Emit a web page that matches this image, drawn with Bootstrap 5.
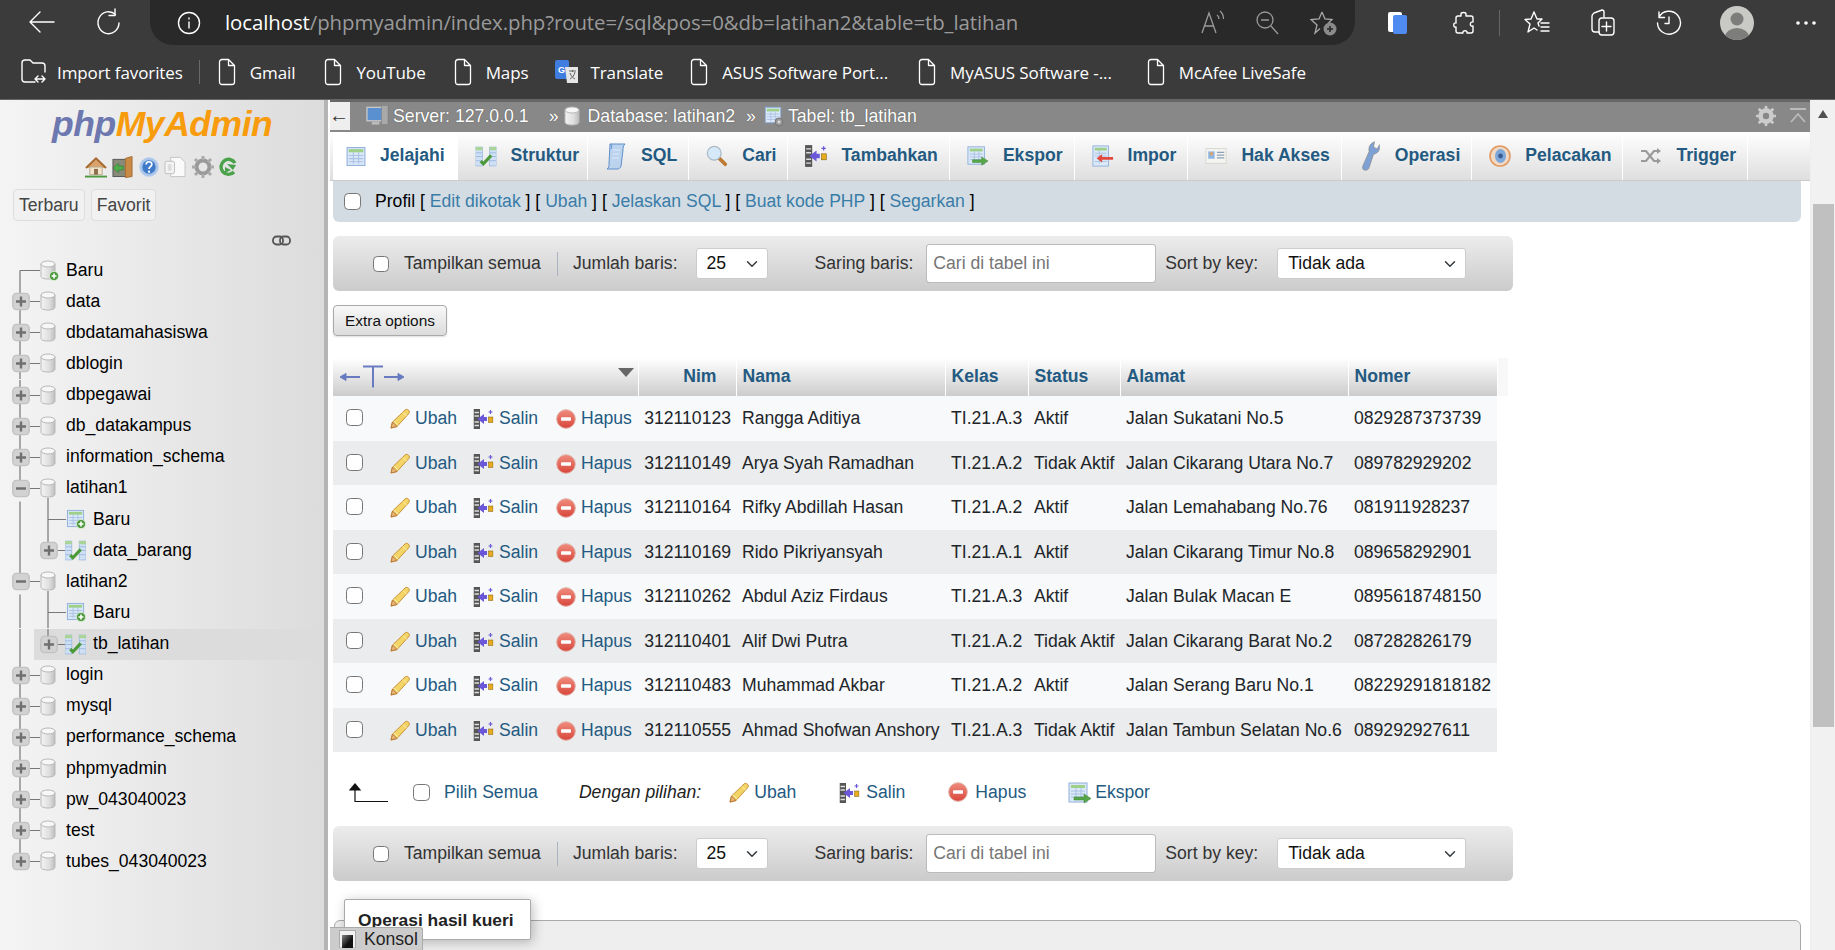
<!DOCTYPE html>
<html lang="id">
<head>
<meta charset="utf-8">
<title>phpMyAdmin</title>
<link href="https://cdn.jsdelivr.net/npm/bootstrap@5.3.0/dist/css/bootstrap.min.css" rel="stylesheet">
<style>
html,body{height:950px;overflow:hidden}
body{font:17.6px/1.25 "Liberation Sans",Arial,sans-serif;color:#000;background:#fff}
a{color:#235a81;text-decoration:none}
svg{flex:none;display:block}
.defsbox{width:0;height:0;overflow:hidden}
/* browser chrome */
.chr1{height:50px;background:#3b3b3b;color:#fff}
.chr2{height:50px;padding-bottom:5px;background:#3b3b3b;color:#fff;border-bottom:1px solid #666;font:17px/1 "Open Sans",sans-serif;letter-spacing:-.1px}
.chr-ico{fill:none;stroke:#fff;stroke-width:1.4;stroke-linecap:round;stroke-linejoin:round}
.urlpill{width:1205px;flex:none;height:45px;margin:0 0 5px 26px;background:#292929;border-radius:0 0 23px 23px;font:20.4px/1 "Open Sans",sans-serif;letter-spacing:-.07px;padding-left:27px}
.urlhost{color:#fff}.urlrest{color:#9a9a9a}
.bm{white-space:nowrap}
.bm svg{margin-right:14px}
/* left nav */
.pnav{width:324px;flex:none;background:linear-gradient(90deg,#f4f4f4,#dcdcdc);overflow:hidden}
.logotext{font:italic 700 35.5px/1 "Liberation Sans",sans-serif;letter-spacing:-.45px;margin:7px 0 0 52px;height:39px}
.logotext b:first-child{color:#6c78af}.logotext b:last-child{color:#f89c0e}
.navicons{margin:9px 0 0 85px;gap:5.4px;height:24px}
.navtabs{margin:10px 0 0 13px;gap:6px}
.navbtn{padding:0 5px;height:32px;line-height:30px;background:#f1f1f1;border:1px solid #ddd;border-radius:4px;color:#444}
.linkico{margin:14px 0 9px 272px}
.treerow{height:31.14px;white-space:nowrap}
.nowcur{background:linear-gradient(90deg,transparent 34px,#dcdcdc 34px)}
.tline{stroke:#777;stroke-width:1.2;fill:none}
.split{width:6px;flex:none;background:linear-gradient(90deg,#b4b4b4 66%,#fff 66%)}
/* main */
.pmain{min-width:0;position:relative;overflow:hidden}
.srvbar{height:32px;padding-bottom:2px;background:#888;border-top:2px solid #666;color:#fff;font-size:17.7px;margin-left:-2px;text-shadow:0 0 1px #444;white-space:nowrap}
.backbox{width:22px;height:28px;background:#eee;color:#333;font-size:20px;line-height:26px;text-align:center;text-shadow:none;margin-right:16px}
.srvsep1{margin:0 5px 0 20px}
.srvsep2{margin:0 8px 0 11px}
.pmtabs{height:49px;background:linear-gradient(#fff,#dedede);padding-left:3px;border-bottom:1px solid #ccc}
.pmtab{height:48px;padding:0 11px 0 17px;border-right:1px solid #fff;font-weight:700;color:#235a81;gap:14px;white-space:nowrap}
.pmtab svg{width:22px}
.pmtab.on{background:#fff;padding-left:12px;padding-right:12px;gap:13px}
.pmtab.tb2{padding-right:8px}
.pfbar{height:41px;margin:0 9px 0 3px;background:#d3dce3;border-radius:0 0 6px 6px;padding-left:11px;white-space:nowrap}
.pfbar a{color:#3a7ca8}
.pftx{margin-left:14px}
.fchk{width:17px;height:17px;margin:0!important;flex:none;border:1px solid #767676;border-radius:3px}
.tbar{width:1180px;height:55px;margin-left:3px;background:linear-gradient(#ececec,#cbcbcb);border-radius:6px;color:#333;white-space:nowrap}
.tbar .fchk{margin-left:40px!important;width:16px;height:16px}
.tbar .lb1{margin-left:15px}
.tbsep{width:1px;height:24px;background:#a9b4c0;margin-left:16px}
.lb2{margin-left:15px}
.sel{height:31px;padding:0 0 0 10px;margin-left:18px;font-size:17.6px;line-height:29px;color:#111;border:1px solid #ccc;border-radius:3px;background-position:right 8px center;background-size:14px 12px}
.sel1{width:72px}.sel2{width:189px;margin-left:19px}
.lb3{margin-left:47px}.lb4{margin-left:9px}
.inp{width:230px;height:39px;margin-left:13px;padding:0 6px;font-size:17.6px;border:1px solid #bbb;border-radius:3px}
.inp::placeholder{color:#757575;opacity:1}
.xbtn{display:block;width:114px;height:31px;margin:14px 0 22px 3px;padding:0;font-size:15.4px;line-height:29px;color:#111;background:linear-gradient(#f8f8f8,#dcdcdc);border:1px solid #aaa;border-radius:4px;box-shadow:0 1px 2px #ddd}
.dtbl{width:1175px;margin:0 0 0 3px;table-layout:fixed;border-collapse:collapse}
.dtbl>:not(caption)>*>*{padding:0;border:0;box-shadow:none;background:none;color:inherit;vertical-align:middle;white-space:nowrap}
.dtbl thead tr{height:38px;background:linear-gradient(#fff,#ccc)}
.dtbl th{color:#235a81;border-right:1px solid #fff!important;padding-left:6px!important}
.dtbl thead tr th.xcol{background:#f8f8f8!important;border:0!important;padding:0!important}
.dtbl tbody tr{height:44.5px;background:#f8f9fa}
.dtbl tbody tr.ev{background:#ebeced}
.dtbl td{padding-left:6px!important;padding-top:2px!important}
.dtbl tbody td.xcol{background:#fff!important;padding:0!important}
.dtbl td.ck{padding-left:13px!important;padding-top:4px!important}
.dtbl td.num{text-align:right;padding-right:5px!important;padding-left:0!important}
.acell{display:flex;align-items:center;gap:5px}
.dtbl td.ac1{padding-left:7px!important}
.ac1 .acell{gap:4px}
.dtbl td.ac2{padding-left:8px!important}
.dtbl td.ac3{padding-left:8px!important}
.thsort{height:38px}
.tsort{width:0;height:0;border:8px solid transparent;border-top:9px solid #666;border-bottom:0;margin:0 4px 10px auto}
.bact{height:74px;padding:7px 0 0 19px;white-space:nowrap}
.bact .fchk{margin-left:25px!important}
.bact>a.psm{margin-left:14px}
.bact em{margin-left:41px;color:#222}
.bact .alink{display:flex;align-items:center;gap:4px}
.bact .alink.g6{gap:6px}.bact .alink.g7{gap:7px}.bact .alink.g3{gap:3px}
.flegwrap{margin-top:39px;margin-right:9px;margin-left:4px;height:80px;background:#eee;border:1px solid #aaa;border-radius:6px 6px 0 0}
.fleg{display:block;width:187px;height:41px;margin:-22px 0 0 9px;padding-left:13px;line-height:41px;font-weight:700;color:#222;font-size:17.4px;background:#fff;border:1px solid #aaa;border-radius:2px;box-shadow:2px 2px 12px rgba(0,0,0,.25)}
.konsol{position:absolute;left:-2px;bottom:0;width:95px;height:23px;background:#ccc;border:1px solid #aaa;border-bottom:0;border-radius:3px 3px 0 0;color:#222;padding-left:10px;gap:8px;line-height:22px}
.vscr{width:25px;flex:none;background:#f1f1f1;border-left:1px solid #eee}
.vscr i{display:block;width:0;height:0;margin:10px auto 0;border:5px solid transparent;border-bottom:8px solid #505050;border-top:0}
.vthumb{width:21px;height:523px;margin:86px auto 0;background:#c0c0c0}
</style>
</head>
<body class="d-flex flex-column">
<svg class="defsbox" aria-hidden="true">
<defs>
<linearGradient id="gdb" x1="0" x2="1" y1="0" y2="0"><stop offset="0" stop-color="#f4f4f4"/><stop offset=".6" stop-color="#dedede"/><stop offset="1" stop-color="#bdbdbd"/></linearGradient>
<linearGradient id="gred" x1="0" x2="0" y1="0" y2="1"><stop offset="0" stop-color="#f08d7e"/><stop offset="1" stop-color="#d8453b"/></linearGradient>
<symbol id="db" viewBox="0 0 16 20"><path d="M1 4v12c0 2 3 3 7 3s7-1 7-3V4z" fill="url(#gdb)" stroke="#b8b8b8"/><ellipse cx="8" cy="4" rx="7" ry="3" fill="#f7f7f7" stroke="#b8b8b8"/></symbol>
<symbol id="plusg" viewBox="0 0 10 10"><circle cx="5" cy="5" r="4.6" fill="#4f9a3f" stroke="#dff0d8" stroke-width=".8"/><path d="M2.5 5h5M5 2.5v5" stroke="#fff" stroke-width="1.6"/></symbol>
<symbol id="tbl" viewBox="0 0 20 20"><rect x="1.5" y="1.5" width="17" height="17" fill="#dbe8f7" stroke="#8fb0dc"/><rect x="3" y="3" width="14" height="3" fill="#9fd08a"/><path d="M3 9h14M3 12h14M3 15h14M7.500 6v11M12.500 6v11" stroke="#a9c2e5"/></symbol>
<symbol id="tst" viewBox="0 0 20 20"><rect x="0" y="1" width="6.500" height="18" fill="#cfe0f4" stroke="#8fb0dc" stroke-width=".6"/><rect x="13.500" y="1" width="6.500" height="18" fill="#cfe0f4" stroke="#8fb0dc" stroke-width=".6"/><path d="M.5 6.500h6M.5 10h6M.5 14h6M13.500 6.500h6M13.500 10h6M13.500 14h6" stroke="#8fb0dc" stroke-width=".7"/><rect x="0" y="1" width="6.500" height="3" fill="#a8d595"/><rect x="13.500" y="1" width="6.500" height="3" fill="#a8d595"/><path d="M5 14.500l2.500 2.500L15 9" fill="none" stroke="#4c9a3a" stroke-width="3"/></symbol>
<symbol id="exp" viewBox="0 0 18 18"><rect x=".8" y=".8" width="16.400" height="16.400" rx="4" fill="#d2d2d2" stroke="#c2c2c2" stroke-width="1.400"/><path d="M4 9h10M9 4v10" stroke="#707070" stroke-width="2.400"/></symbol>
<symbol id="col" viewBox="0 0 18 18"><rect x=".8" y=".8" width="16.400" height="16.400" rx="4" fill="#d2d2d2" stroke="#c2c2c2" stroke-width="1.400"/><path d="M4 9h10" stroke="#707070" stroke-width="2.400"/></symbol>
<symbol id="pen" viewBox="0 0 22 22"><path d="M2 20l1.500-6L16 2c1-1 2.500-.8 3.500.2s1.200 2.500.2 3.500L8 18.500z" fill="#f3d466" stroke="#c9923b"/><path d="M5 13l4.500 4.500M14 4.500l4 4" stroke="#fbeeb0"/><path d="M2 20l1.500-6 4.500 4.500z" fill="#e9b675" stroke="#b9793a"/></symbol>
<symbol id="cop" viewBox="0 0 20 22"><rect x="0" y="1" width="6.500" height="20" fill="#555"/><path d="M1 4.500h4.500M1 8h4.500M1 14h4.500M1 17.500h4.500" stroke="#ddd" stroke-width="1.300"/><path d="M4 11l6.500-5v3h3v4h-3v3z" fill="#6a58d8"/><rect x="15" y="9" width="4.500" height="5.500" fill="#e7ad1e" stroke="#7a5c10" stroke-width=".5"/><path d="M17 2v4M15 4h4" stroke="#6a58d8" stroke-width="1.200"/></symbol>
<symbol id="del" viewBox="0 0 20 20"><circle cx="10" cy="10" r="9.300" fill="url(#gred)" stroke="#e0b0a6"/><rect x="5" y="8.300" width="10" height="3.400" rx=".8" fill="#fff"/></symbol>
<symbol id="expo" viewBox="0 0 24 22"><rect x="1" y="1" width="18" height="19" fill="#dbe8f7" stroke="#8fb0dc"/><rect x="3" y="3" width="14" height="3" fill="#9fd08a"/><path d="M3 9h14M3 12h14M3 15h14M8 6v12M13 6v12" stroke="#a9c2e5"/><path d="M6 15h10v-3l7 4.500-7 4.500v-3H6z" fill="#57a64a" stroke="#3e8433" stroke-width=".5"/></symbol>
<symbol id="impo" viewBox="0 0 24 24"><rect x="1" y="1" width="17" height="22" fill="#dbe8f7" stroke="#8fb0dc"/><rect x="3" y="3" width="13" height="3" fill="#9fd08a"/><path d="M3 9h13M3 12h13M3 18h13M8 6v14" stroke="#a9c2e5"/><path d="M23 13H11v-3l-6 4.500 6 4.500v-3h12z" fill="#e2483c"/></symbol>
<symbol id="sqlc" viewBox="0 0 22 28"><path d="M5 2h15c-2 2-2 4-2 6l-2 16c-.5 2-2 3-4 3H2c2-1 2-3 2-5z" fill="#bcd3ee" stroke="#5f8fca"/><path d="M5 2c2 0 2 3 1 5" fill="none" stroke="#5f8fca"/><path d="M8 8h7M8 12h6M7 16h7" stroke="#dfeafa"/></symbol>
<symbol id="lens" viewBox="0 0 24 24"><path d="M14 14l7 7" stroke="#bd7a32" stroke-width="4" stroke-linecap="round"/><circle cx="9" cy="9" r="7.500" fill="#d6e9f8" stroke="#a9b9c6" stroke-width="1.400"/></symbol>
<symbol id="priv" viewBox="0 0 24 20"><rect x="1" y="2" width="22" height="16" fill="#f4f4f0" stroke="#d6d6d0"/><rect x="3.500" y="5" width="7" height="8" fill="#8fb6e2"/><circle cx="7" cy="7.500" r="2" fill="#d9a36b"/><path d="M13 6h8M13 9h8M13 12h8" stroke="#8da0b5" stroke-width="1.300"/></symbol>
<symbol id="wren" viewBox="0 0 22 36"><path d="M6 34c-3 0-4-2-3-5l7-16c-1-5 1-9 6-11l-1 6 4 2 3-5c1 6-2 10-7 11l-5 15c-.5 2-2 3-4 3z" fill="#7da1d4" stroke="#8c8c8c" stroke-width=".8"/></symbol>
<symbol id="eyee" viewBox="0 0 22 22"><circle cx="11" cy="11" r="10" fill="#f1d9c4" stroke="#e29a64" stroke-width="1.600"/><ellipse cx="11.500" cy="11" rx="5.500" ry="7" fill="#7ea7da"/><circle cx="11.500" cy="11" r="2.400" fill="#3c5a8c"/></symbol>
<symbol id="trig" viewBox="0 0 22 20"><path d="M1 5h5l8 10h5M1 15h5l8-10h5" fill="none" stroke="#9a9a9a" stroke-width="2.200"/><path d="M17 2l4 3-4 3zM17 12l4 3-4 3z" fill="#9a9a9a"/></symbol>
<symbol id="srv" viewBox="0 0 24 22"><rect x="1" y="2" width="18" height="14" fill="#5a8fd0" stroke="#c8c8c8" stroke-width="1.400"/><rect x="16" y="0" width="7" height="20" fill="#a9a9a9" stroke="#777" stroke-width=".5"/><rect x="6" y="17" width="8" height="3" fill="#bbb"/></symbol>
<symbol id="tgear" viewBox="0 0 20 22"><use href="#tbl" width="18" height="20"/><circle cx="15" cy="17" r="4" fill="#999" stroke="#777"/><circle cx="15" cy="17" r="1.400" fill="#ddd"/></symbol>
<symbol id="pfile" viewBox="0 0 18 28"><path d="M1.500 4c0-1.500 1-2.500 2.500-2.500h6.500l6 6V24c0 1.500-1 2.500-2.500 2.500H4c-1.500 0-2.500-1-2.500-2.500zM10.500 1.500V7.500h6" fill="none" stroke="#fff" stroke-width="1.300" stroke-linejoin="round"/></symbol>
</defs>
</svg>

<div class="chr1 d-flex align-items-start flex-shrink-0">
  <svg class="chr-ico" width="30" height="30" viewBox="0 0 30 30" style="margin:8px 0 0 27px"><path d="M27 14H3M13 4L3 14l10 10"/></svg>
  <svg class="chr-ico" width="30" height="30" viewBox="0 0 30 30" style="margin:8px 0 0 37px"><path d="M25 15a10.500 11 0 1 1-3.500-8.500M21 1v6.500h-6"/></svg>
  <div class="urlpill d-flex align-items-center">
    <svg class="chr-ico" width="24" height="24" viewBox="0 0 24 24"><circle cx="12" cy="12" r="10.500"/><path d="M12 11v6M12 7v1"/></svg>
    <span class="ms-4"><span class="urlhost">localhost</span><span class="urlrest">/phpmyadmin/index.php?route=/sql&amp;pos=0&amp;db=latihan2&amp;table=tb_latihan</span></span>
  </div>
  <div class="d-flex" style="margin-left:-155px;margin-top:10px;gap:30px">
    <svg width="25" height="26" viewBox="0 0 25 26" fill="none" stroke="#9a9a9a" stroke-width="1.300"><path d="M2 23L9 3l7 20M4.500 16h9M17 5c1.500 1 2 2.500 2 4M20 1c2.500 2 3.500 5 3.500 8"/></svg>
    <svg width="25" height="26" viewBox="0 0 25 26" fill="none" stroke="#9a9a9a" stroke-width="1.300"><circle cx="10" cy="10" r="8"/><path d="M6 10h8M16 16l7 8"/></svg>
    <svg width="27" height="26" viewBox="0 0 27 26" fill="none" stroke="#a8a8a8" stroke-width="1.300"><path d="M12 2l3 7 7 .5-4 4M10 18.500L5 23l2-8-6-5.500 8-.5 3-7"/><circle cx="20" cy="19" r="6.500" fill="#8a8a8a" stroke="none"/><path d="M17 19h6M20 16v6" stroke="#292929" stroke-width="1.600"/></svg>
  </div>
  <div class="d-flex align-items-center" style="margin:6px 0 0 50px;height:34px">
    <svg width="22" height="24" viewBox="0 0 22 24"><rect x="1" y="1" width="14" height="20" rx="2" fill="#fff"/><rect x="6" y="4" width="14" height="19" rx="2" fill="#4f8bf0"/></svg>
    <svg class="chr-ico" width="24" height="26" viewBox="0 0 24 26" style="margin-left:43px"><path d="M9 4c0-2 5-2 5 0v2h5c1 0 2 1 2 2v4c-3-1-4 5 0 4v5c0 1-1 2-2 2h-4c1-3-5-3-4 0H6c-1 0-2-1-2-2v-4c-3 1-3-5 0-4V8c0-1 1-2 2-2h3z"/></svg>
    <span style="width:1px;height:26px;background:#666;margin-left:23px"></span>
    <svg class="chr-ico" width="26" height="26" viewBox="0 0 26 26" style="margin-left:24px"><path d="M10 2l3 7h5l-4 4 1 3M10 2L7 9l-6 .5L6 14l-2 8 6-4 3 2M17 13h8M17 17h8M17 21h8"/></svg>
    <svg class="chr-ico" width="24" height="28" viewBox="0 0 24 28" style="margin-left:41px"><rect x="8" y="9" width="15" height="17" rx="3"/><path d="M15.500 13v9M11 17.500h9M8 23H4c-2 0-3-1-3-3V7c0-1 .5-2 2-3l8-3c1 0 2 1 2 2v5"/></svg>
    <svg class="chr-ico" width="26" height="26" viewBox="0 0 26 26" style="margin-left:41px"><path d="M3 7A11.500 11.500 0 1 1 1.500 13M3 2v5.500h5.500M13 7v6.500h-4"/></svg>
    <svg width="34" height="34" viewBox="0 0 34 34" style="margin-left:38px"><defs><clipPath id="cav"><circle cx="17" cy="17" r="17"/></clipPath></defs><circle cx="17" cy="17" r="17" fill="#c9c9c6"/><g clip-path="url(#cav)" fill="#7d7d7b"><circle cx="17" cy="13" r="6.500"/><ellipse cx="17" cy="31" rx="12" ry="9"/></g></svg>
    <svg width="22" height="6" viewBox="0 0 22 6" fill="#fff" style="margin-left:41px"><circle cx="3" cy="3" r="1.800"/><circle cx="11" cy="3" r="1.800"/><circle cx="19" cy="3" r="1.800"/></svg>
  </div>
</div>

<div class="chr2 d-flex align-items-center flex-shrink-0">
  <svg class="chr-ico" width="26" height="26" viewBox="0 0 26 26" style="margin-left:21px"><path d="M14 23H4c-2 0-3-1-3-3V4c0-1.500 1-3 3-3h5l3 3h9c2 0 3 1 3 3v6M14 20h10M17 17l-3 3 3 3M21 17l3 3-3 3"/></svg>
  <span style="margin-left:10px">Import favorites</span>
  <span style="width:1px;height:24px;background:#6a6a6a;margin-left:16px"></span>
  <div class="d-flex align-items-center bm" style="margin-left:18px"><svg width="18" height="28" viewBox="0 0 18 28"><use href="#pfile"/></svg>Gmail</div>
  <div class="d-flex align-items-center bm" style="margin-left:29px"><svg width="18" height="28" viewBox="0 0 18 28"><use href="#pfile"/></svg>YouTube</div>
  <div class="d-flex align-items-center bm" style="margin-left:28px"><svg width="18" height="28" viewBox="0 0 18 28"><use href="#pfile"/></svg>Maps</div>
  <div class="d-flex align-items-center bm" style="margin-left:27px"><svg width="24" height="26" viewBox="0 0 24 26" style="margin-right:11px"><rect x="0" y="1" width="14" height="19" rx="2" fill="#3f7de0"/><path d="M10 8h13v16H12z" fill="#e6e6e6"/><text x="3" y="14" font-size="9" font-weight="700" fill="#fff" font-family="Liberation Sans">G</text><path d="M14 12h7M17.500 11v2M20 13c-1 4-3 6-5 7M15 14c1 3 3 5 5 6" stroke="#666" fill="none"/></svg>Translate</div>
  <div class="d-flex align-items-center bm" style="margin-left:27px"><svg width="18" height="28" viewBox="0 0 18 28"><use href="#pfile"/></svg>ASUS Software Port...</div>
  <div class="d-flex align-items-center bm" style="margin-left:30px"><svg width="18" height="28" viewBox="0 0 18 28"><use href="#pfile"/></svg>MyASUS Software -...</div>
  <div class="d-flex align-items-center bm" style="margin-left:35px"><svg width="18" height="28" viewBox="0 0 18 28"><use href="#pfile"/></svg>McAfee LiveSafe</div>
</div>

<div class="d-flex flex-grow-1" style="min-height:0">
  <aside class="pnav">
    <div class="logotext"><b>php</b><b>MyAdmin</b></div>
    <div class="d-flex align-items-center navicons">
      <svg width="22" height="22" viewBox="0 0 23 22"><path d="M1 12L11.500 2 22 12" fill="#d9a36b" stroke="#a56a30" stroke-width="2"/><path d="M5 11h13v8H5z" fill="#f0e4cc" stroke="#b9a98e"/><rect x="9.500" y="13" width="4" height="6" fill="#8a6b4a"/><path d="M0 21h23" stroke="#4f9a3f" stroke-width="2"/></svg>
      <svg width="21" height="22" viewBox="0 0 22 22"><rect x="1" y="3" width="14" height="18" fill="#8a8a7a" stroke="#555"/><path d="M14 2l7-2v21l-7 1z" fill="#c98a45" stroke="#a56a30"/><path d="M1 12l6-5v3h5v4H7v3z" fill="#4fae4a" stroke="#2e7a2a" stroke-width=".6"/></svg>
      <svg width="20" height="20" viewBox="0 0 21 21"><circle cx="10.500" cy="10.500" r="10" fill="#a8c4e8" stroke="#c6d8ef"/><circle cx="10.500" cy="10.500" r="7" fill="#3f7ac8"/><path d="M7.500 8c0-4 6-4 6 0 0 2-3 2-3 4.500" fill="none" stroke="#fff" stroke-width="1.800"/><circle cx="10.500" cy="15.500" r="1.200" fill="#fff"/></svg>
      <svg width="22" height="22" viewBox="0 0 23 22"><path d="M7 1h10l5 5v15H7z" fill="#fafafa" stroke="#c4c4c4"/><rect x="1" y="5" width="10" height="13" rx="2" fill="#f3f3f3" stroke="#bdbdbd"/><rect x="4" y="8" width="4" height="7" fill="#ddd"/></svg>
      <svg width="22" height="22" viewBox="0 0 22 22"><circle cx="11" cy="11" r="6.500" fill="none" stroke="#999" stroke-width="4"/><path d="M11 0v4M11 18v4M0 11h4M18 11h4M3 3l3 3M16 16l3 3M3 19l3-3M16 6l3-3" stroke="#aaa" stroke-width="3"/></svg>
      <svg width="18" height="20" viewBox="0 0 18 20"><path d="M16 6A7.500 7.500 0 1 0 15 15" fill="none" stroke="#4aa24a" stroke-width="3.400"/><path d="M8 7l9 1-3 5zM6 10l6 3-6 3z" fill="#4aa24a"/></svg>
    </div>
    <div class="d-flex navtabs"><span class="navbtn">Terbaru</span><span class="navbtn">Favorit</span></div>
    <svg class="linkico" width="19" height="11" viewBox="0 0 19 11" fill="none" stroke="#555" stroke-width="1.800"><rect x="1" y="1.500" width="10" height="8" rx="3.500"/><rect x="8" y="1.500" width="10" height="8" rx="3.500"/></svg>
    <ul class="list-unstyled mb-0">
      <li class="d-flex align-items-center treerow"><svg width="66" height="31" viewBox="0 0 66 31"><path class="tline" d="M20 15.500V31M20 15.500h20"/><use href="#db" x="40" y="5" width="16" height="20"/><use href="#plusg" x="49" y="16" width="10" height="10"/></svg>Baru</li>
      <li class="d-flex align-items-center treerow"><svg width="66" height="31" viewBox="0 0 66 31"><path class="tline" d="M20 0V31M30 15.500h10"/><use href="#exp" x="12" y="6.500" width="18" height="18"/><use href="#db" x="40" y="5" width="16" height="20"/></svg>data</li>
      <li class="d-flex align-items-center treerow"><svg width="66" height="31" viewBox="0 0 66 31"><path class="tline" d="M20 0V31M30 15.500h10"/><use href="#exp" x="12" y="6.500" width="18" height="18"/><use href="#db" x="40" y="5" width="16" height="20"/></svg>dbdatamahasiswa</li>
      <li class="d-flex align-items-center treerow"><svg width="66" height="31" viewBox="0 0 66 31"><path class="tline" d="M20 0V31M30 15.500h10"/><use href="#exp" x="12" y="6.500" width="18" height="18"/><use href="#db" x="40" y="5" width="16" height="20"/></svg>dblogin</li>
      <li class="d-flex align-items-center treerow"><svg width="66" height="31" viewBox="0 0 66 31"><path class="tline" d="M20 0V31M30 15.500h10"/><use href="#exp" x="12" y="6.500" width="18" height="18"/><use href="#db" x="40" y="5" width="16" height="20"/></svg>dbpegawai</li>
      <li class="d-flex align-items-center treerow"><svg width="66" height="31" viewBox="0 0 66 31"><path class="tline" d="M20 0V31M30 15.500h10"/><use href="#exp" x="12" y="6.500" width="18" height="18"/><use href="#db" x="40" y="5" width="16" height="20"/></svg>db_datakampus</li>
      <li class="d-flex align-items-center treerow"><svg width="66" height="31" viewBox="0 0 66 31"><path class="tline" d="M20 0V31M30 15.500h10"/><use href="#exp" x="12" y="6.500" width="18" height="18"/><use href="#db" x="40" y="5" width="16" height="20"/></svg>information_schema</li>
      <li class="d-flex align-items-center treerow"><svg width="66" height="31" viewBox="0 0 66 31"><path class="tline" d="M20 0V8M20 28.500V31M30 15.500h10M48 25V31"/><use href="#col" x="12" y="6.500" width="18" height="18"/><use href="#db" x="40" y="5" width="16" height="20"/></svg>latihan1</li>
      <li class="d-flex align-items-center treerow"><svg width="93" height="31" viewBox="0 0 93 31"><path class="tline" d="M20 0V31M48 0V31M48 15.500h18"/><use href="#tbl" x="66" y="5" width="19" height="19"/><use href="#plusg" x="76" y="15" width="10" height="10"/></svg>Baru</li>
      <li class="d-flex align-items-center treerow"><svg width="93" height="31" viewBox="0 0 93 31"><path class="tline" d="M20 0V31M48 0V7M58 15.500h8"/><use href="#exp" x="40" y="6.500" width="18" height="18"/><use href="#tst" x="65" y="5" width="21" height="21"/></svg>data_barang</li>
      <li class="d-flex align-items-center treerow"><svg width="66" height="31" viewBox="0 0 66 31"><path class="tline" d="M20 0V8M20 28.500V31M30 15.500h10M48 25V31"/><use href="#col" x="12" y="6.500" width="18" height="18"/><use href="#db" x="40" y="5" width="16" height="20"/></svg>latihan2</li>
      <li class="d-flex align-items-center treerow"><svg width="93" height="31" viewBox="0 0 93 31"><path class="tline" d="M20 0V31M48 0V31M48 15.500h18"/><use href="#tbl" x="66" y="5" width="19" height="19"/><use href="#plusg" x="76" y="15" width="10" height="10"/></svg>Baru</li>
      <li class="d-flex align-items-center treerow nowcur"><svg width="93" height="31" viewBox="0 0 93 31"><path class="tline" d="M20 0V31M48 0V7M58 15.500h8"/><use href="#exp" x="40" y="6.500" width="18" height="18"/><use href="#tst" x="65" y="5" width="21" height="21"/></svg>tb_latihan</li>
      <li class="d-flex align-items-center treerow"><svg width="66" height="31" viewBox="0 0 66 31"><path class="tline" d="M20 0V31M30 15.500h10"/><use href="#exp" x="12" y="6.500" width="18" height="18"/><use href="#db" x="40" y="5" width="16" height="20"/></svg>login</li>
      <li class="d-flex align-items-center treerow"><svg width="66" height="31" viewBox="0 0 66 31"><path class="tline" d="M20 0V31M30 15.500h10"/><use href="#exp" x="12" y="6.500" width="18" height="18"/><use href="#db" x="40" y="5" width="16" height="20"/></svg>mysql</li>
      <li class="d-flex align-items-center treerow"><svg width="66" height="31" viewBox="0 0 66 31"><path class="tline" d="M20 0V31M30 15.500h10"/><use href="#exp" x="12" y="6.500" width="18" height="18"/><use href="#db" x="40" y="5" width="16" height="20"/></svg>performance_schema</li>
      <li class="d-flex align-items-center treerow"><svg width="66" height="31" viewBox="0 0 66 31"><path class="tline" d="M20 0V31M30 15.500h10"/><use href="#exp" x="12" y="6.500" width="18" height="18"/><use href="#db" x="40" y="5" width="16" height="20"/></svg>phpmyadmin</li>
      <li class="d-flex align-items-center treerow"><svg width="66" height="31" viewBox="0 0 66 31"><path class="tline" d="M20 0V31M30 15.500h10"/><use href="#exp" x="12" y="6.500" width="18" height="18"/><use href="#db" x="40" y="5" width="16" height="20"/></svg>pw_043040023</li>
      <li class="d-flex align-items-center treerow"><svg width="66" height="31" viewBox="0 0 66 31"><path class="tline" d="M20 0V31M30 15.500h10"/><use href="#exp" x="12" y="6.500" width="18" height="18"/><use href="#db" x="40" y="5" width="16" height="20"/></svg>test</li>
      <li class="d-flex align-items-center treerow"><svg width="66" height="31" viewBox="0 0 66 31"><path class="tline" d="M20 0V15.500M30 15.500h10"/><use href="#exp" x="12" y="6.500" width="18" height="18"/><use href="#db" x="40" y="5" width="16" height="20"/></svg>tubes_043040023</li>
    </ul>
  </aside>
  <div class="split"></div>
  <div class="pmain flex-grow-1">
    <div class="srvbar d-flex align-items-center">
      <span class="backbox">←</span>
      <svg width="23" height="22" viewBox="0 0 24 22"><use href="#srv"/></svg><span class="ms-1">Server: 127.0.0.1</span><span class="srvsep1">»</span>
      <svg width="16" height="20" viewBox="0 0 16 20"><use href="#db"/></svg><span class="ms-2">Database: latihan2</span><span class="srvsep2">»</span>
      <svg width="20" height="22" viewBox="0 0 20 22"><use href="#tgear"/></svg><span class="ms-1">Tabel: tb_latihan</span>
      <svg class="ms-auto" width="20" height="20" viewBox="0 0 22 22"><circle cx="11" cy="11" r="6" fill="none" stroke="#ccc" stroke-width="5"/><path d="M11 0v4M11 18v4M0 11h4M18 11h4M3 3l3 3M16 16l3 3M3 19l3-3M16 6l3-3" stroke="#ccc" stroke-width="3"/></svg>
      <svg style="margin:0 4px 0 14px" width="16" height="16" viewBox="0 0 16 16" fill="none" stroke="#bbb" stroke-width="1.800"><path d="M0 1h16M1 14L8 6l7 8"/></svg>
    </div>
    <div class="pmtabs d-flex">
      <a class="pmtab on d-flex align-items-center"><svg height="21" viewBox="0 0 20 20"><use href="#tbl"/></svg>Jelajahi</a>
      <a class="pmtab tb2 d-flex align-items-center"><svg height="21" viewBox="0 0 20 20"><use href="#tst"/></svg>Struktur</a>
      <a class="pmtab d-flex align-items-center"><svg height="28" viewBox="0 0 22 28"><use href="#sqlc"/></svg>SQL</a>
      <a class="pmtab d-flex align-items-center"><svg height="22" viewBox="0 0 24 24"><use href="#lens"/></svg>Cari</a>
      <a class="pmtab d-flex align-items-center"><svg height="24" viewBox="0 0 20 22"><use href="#cop"/></svg>Tambahkan</a>
      <a class="pmtab d-flex align-items-center"><svg height="22" viewBox="0 0 24 22"><use href="#expo"/></svg>Ekspor</a>
      <a class="pmtab d-flex align-items-center"><svg height="22" viewBox="0 0 24 24"><use href="#impo"/></svg>Impor</a>
      <a class="pmtab d-flex align-items-center"><svg height="20" viewBox="0 0 24 20"><use href="#priv"/></svg>Hak Akses</a>
      <a class="pmtab d-flex align-items-center"><svg height="32" viewBox="0 0 22 36"><use href="#wren"/></svg>Operasi</a>
      <a class="pmtab d-flex align-items-center"><svg height="22" viewBox="0 0 22 22"><use href="#eyee"/></svg>Pelacakan</a>
      <a class="pmtab d-flex align-items-center"><svg height="20" viewBox="0 0 22 20"><use href="#trig"/></svg>Trigger</a>
    </div>
    <div class="pfbar d-flex align-items-center">
      <input class="form-check-input fchk" type="checkbox" aria-label="Profil">
      <span class="pftx">Profil [ <a href="#">Edit dikotak</a> ] [ <a href="#">Ubah</a> ] [ <a href="#">Jelaskan SQL</a> ] [ <a href="#">Buat kode PHP</a> ] [ <a href="#">Segarkan</a> ]</span>
    </div>
    <div class="tbar d-flex align-items-center" style="margin-top:14px">
      <input class="form-check-input fchk" type="checkbox" aria-label="Tampilkan semua"><span class="lb1">Tampilkan semua</span><span class="tbsep"></span><span class="lb2">Jumlah baris:</span>
      <select class="form-select sel sel1" aria-label="Jumlah baris"><option>25</option></select><span class="lb3">Saring baris:</span>
      <input class="form-control inp" type="text" placeholder="Cari di tabel ini"><span class="lb4">Sort by key:</span>
      <select class="form-select sel sel2" aria-label="Sort by key"><option>Tidak ada</option></select>
    </div>
    <button class="btn xbtn" type="button">Extra options</button>
    <table class="table dtbl">
      <colgroup><col style="width:49px"><col style="width:83px"><col style="width:83px"><col style="width:90px"><col style="width:98px"><col style="width:209px"><col style="width:83px"><col style="width:92px"><col style="width:228px"><col style="width:149px"><col style="width:11px"></colgroup>
      <thead><tr>
        <th colspan="4"><div class="d-flex align-items-center thsort"><svg width="66" height="28" viewBox="0 0 66 28" fill="#6a7ac0" stroke="#6a7ac0"><path d="M4 14h17M24 3.500h20M34 3.500v21M45 14h17" stroke-width="2" fill="none"/><path d="M1 14l6-3.500v7zM65 14l-6-3.500v7z"/></svg><span class="tsort"></span></div></th>
        <th class="text-end" style="padding-right:19px">Nim</th><th>Nama</th><th>Kelas</th><th>Status</th><th>Alamat</th><th>Nomer</th><th class="xcol"></th>
      </tr></thead>
      <tbody>
        <tr><td class="ck"><input class="form-check-input fchk" type="checkbox" aria-label="baris"></td><td class="ac1"><a class="acell" href="#"><svg width="22" height="22" viewBox="0 0 22 22"><use href="#pen"/></svg>Ubah</a></td><td class="ac2"><a class="acell" href="#"><svg width="21" height="22" viewBox="0 0 20 22"><use href="#cop"/></svg>Salin</a></td><td class="ac3"><a class="acell" href="#"><svg width="20" height="20" viewBox="0 0 20 20"><use href="#del"/></svg>Hapus</a></td><td class="num">312110123</td><td>Rangga Aditiya</td><td>TI.21.A.3</td><td>Aktif</td><td>Jalan Sukatani No.5</td><td>0829287373739</td><td class="xcol"></td></tr>
        <tr class="ev"><td class="ck"><input class="form-check-input fchk" type="checkbox" aria-label="baris"></td><td class="ac1"><a class="acell" href="#"><svg width="22" height="22" viewBox="0 0 22 22"><use href="#pen"/></svg>Ubah</a></td><td class="ac2"><a class="acell" href="#"><svg width="21" height="22" viewBox="0 0 20 22"><use href="#cop"/></svg>Salin</a></td><td class="ac3"><a class="acell" href="#"><svg width="20" height="20" viewBox="0 0 20 20"><use href="#del"/></svg>Hapus</a></td><td class="num">312110149</td><td>Arya Syah Ramadhan</td><td>TI.21.A.2</td><td>Tidak Aktif</td><td>Jalan Cikarang Utara No.7</td><td>089782929202</td><td class="xcol"></td></tr>
        <tr><td class="ck"><input class="form-check-input fchk" type="checkbox" aria-label="baris"></td><td class="ac1"><a class="acell" href="#"><svg width="22" height="22" viewBox="0 0 22 22"><use href="#pen"/></svg>Ubah</a></td><td class="ac2"><a class="acell" href="#"><svg width="21" height="22" viewBox="0 0 20 22"><use href="#cop"/></svg>Salin</a></td><td class="ac3"><a class="acell" href="#"><svg width="20" height="20" viewBox="0 0 20 20"><use href="#del"/></svg>Hapus</a></td><td class="num">312110164</td><td>Rifky Abdillah Hasan</td><td>TI.21.A.2</td><td>Aktif</td><td>Jalan Lemahabang No.76</td><td>081911928237</td><td class="xcol"></td></tr>
        <tr class="ev"><td class="ck"><input class="form-check-input fchk" type="checkbox" aria-label="baris"></td><td class="ac1"><a class="acell" href="#"><svg width="22" height="22" viewBox="0 0 22 22"><use href="#pen"/></svg>Ubah</a></td><td class="ac2"><a class="acell" href="#"><svg width="21" height="22" viewBox="0 0 20 22"><use href="#cop"/></svg>Salin</a></td><td class="ac3"><a class="acell" href="#"><svg width="20" height="20" viewBox="0 0 20 20"><use href="#del"/></svg>Hapus</a></td><td class="num">312110169</td><td>Rido Pikriyansyah</td><td>TI.21.A.1</td><td>Aktif</td><td>Jalan Cikarang Timur No.8</td><td>089658292901</td><td class="xcol"></td></tr>
        <tr><td class="ck"><input class="form-check-input fchk" type="checkbox" aria-label="baris"></td><td class="ac1"><a class="acell" href="#"><svg width="22" height="22" viewBox="0 0 22 22"><use href="#pen"/></svg>Ubah</a></td><td class="ac2"><a class="acell" href="#"><svg width="21" height="22" viewBox="0 0 20 22"><use href="#cop"/></svg>Salin</a></td><td class="ac3"><a class="acell" href="#"><svg width="20" height="20" viewBox="0 0 20 20"><use href="#del"/></svg>Hapus</a></td><td class="num">312110262</td><td>Abdul Aziz Firdaus</td><td>TI.21.A.3</td><td>Aktif</td><td>Jalan Bulak Macan E</td><td>0895618748150</td><td class="xcol"></td></tr>
        <tr class="ev"><td class="ck"><input class="form-check-input fchk" type="checkbox" aria-label="baris"></td><td class="ac1"><a class="acell" href="#"><svg width="22" height="22" viewBox="0 0 22 22"><use href="#pen"/></svg>Ubah</a></td><td class="ac2"><a class="acell" href="#"><svg width="21" height="22" viewBox="0 0 20 22"><use href="#cop"/></svg>Salin</a></td><td class="ac3"><a class="acell" href="#"><svg width="20" height="20" viewBox="0 0 20 20"><use href="#del"/></svg>Hapus</a></td><td class="num">312110401</td><td>Alif Dwi Putra</td><td>TI.21.A.2</td><td>Tidak Aktif</td><td>Jalan Cikarang Barat No.2</td><td>087282826179</td><td class="xcol"></td></tr>
        <tr><td class="ck"><input class="form-check-input fchk" type="checkbox" aria-label="baris"></td><td class="ac1"><a class="acell" href="#"><svg width="22" height="22" viewBox="0 0 22 22"><use href="#pen"/></svg>Ubah</a></td><td class="ac2"><a class="acell" href="#"><svg width="21" height="22" viewBox="0 0 20 22"><use href="#cop"/></svg>Salin</a></td><td class="ac3"><a class="acell" href="#"><svg width="20" height="20" viewBox="0 0 20 20"><use href="#del"/></svg>Hapus</a></td><td class="num">312110483</td><td>Muhammad Akbar</td><td>TI.21.A.2</td><td>Aktif</td><td>Jalan Serang Baru No.1</td><td>08229291818182</td><td class="xcol"></td></tr>
        <tr class="ev"><td class="ck"><input class="form-check-input fchk" type="checkbox" aria-label="baris"></td><td class="ac1"><a class="acell" href="#"><svg width="22" height="22" viewBox="0 0 22 22"><use href="#pen"/></svg>Ubah</a></td><td class="ac2"><a class="acell" href="#"><svg width="21" height="22" viewBox="0 0 20 22"><use href="#cop"/></svg>Salin</a></td><td class="ac3"><a class="acell" href="#"><svg width="20" height="20" viewBox="0 0 20 20"><use href="#del"/></svg>Hapus</a></td><td class="num">312110555</td><td>Ahmad Shofwan Anshory</td><td>TI.21.A.3</td><td>Tidak Aktif</td><td>Jalan Tambun Selatan No.6</td><td>089292927611</td><td class="xcol"></td></tr>
      </tbody>
    </table>
    <div class="bact d-flex align-items-center">
      <svg width="39" height="20" viewBox="0 0 39 20" fill="none" stroke="#111" stroke-width="1.200"><path d="M6 5V18.500H39"/><path d="M1 7l5-6 5 6z" fill="#111"/></svg>
      <input class="form-check-input fchk" type="checkbox" aria-label="Pilih Semua"><a class="psm" href="#">Pilih Semua</a>
      <em>Dengan pilihan:</em>
      <a class="alink" style="margin-left:27px" href="#"><svg width="22" height="22" viewBox="0 0 22 22"><use href="#pen"/></svg>Ubah</a>
      <a class="alink g6" style="margin-left:43px" href="#"><svg width="21" height="22" viewBox="0 0 20 22"><use href="#cop"/></svg>Salin</a>
      <a class="alink g7" style="margin-left:43px" href="#"><svg width="20" height="20" viewBox="0 0 20 20"><use href="#del"/></svg>Hapus</a>
      <a class="alink g3" style="margin-left:42px" href="#"><svg width="24" height="22" viewBox="0 0 24 22"><use href="#expo"/></svg>Ekspor</a>
    </div>
    <div class="tbar d-flex align-items-center">
      <input class="form-check-input fchk" type="checkbox" aria-label="Tampilkan semua"><span class="lb1">Tampilkan semua</span><span class="tbsep"></span><span class="lb2">Jumlah baris:</span>
      <select class="form-select sel sel1" aria-label="Jumlah baris"><option>25</option></select><span class="lb3">Saring baris:</span>
      <input class="form-control inp" type="text" placeholder="Cari di tabel ini"><span class="lb4">Sort by key:</span>
      <select class="form-select sel sel2" aria-label="Sort by key"><option>Tidak ada</option></select>
    </div>
    <div class="flegwrap"><span class="fleg">Operasi hasil kueri</span></div>
    <div class="konsol d-flex align-items-center"><svg width="17" height="18" viewBox="0 0 17 18"><defs><linearGradient id="gks" x1="0" x2="1" y1="0" y2="1"><stop offset="0" stop-color="#888"/><stop offset=".6" stop-color="#111"/></linearGradient></defs><rect x=".5" y=".5" width="16" height="17.500" fill="#f2f2f2" stroke="#aaa"/><rect x="3" y="5" width="11" height="13" fill="url(#gks)"/></svg>Konsol</div>
  </div>
  <div class="vscr"><i></i><div class="vthumb"></div></div>
</div>
<script src="https://cdn.jsdelivr.net/npm/bootstrap@5.3.0/dist/js/bootstrap.bundle.min.js"></script>
</body>
</html>
